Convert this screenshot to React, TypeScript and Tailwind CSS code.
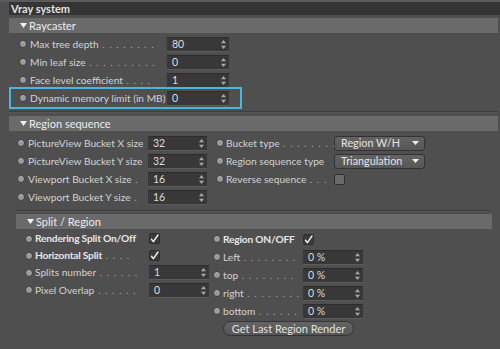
import React from "react";

const Radio = () => (
  <span className="w-[8px] h-[8px] shrink-0 rounded-full bg-[#9a9a9a] border border-[#3c3c3c] shadow-[inset_0_1px_0_rgba(255,255,255,0.35)]" />
);

const Spin = () => (
  <svg width="5" height="9" viewBox="0 0 5 9" className="shrink-0">
    <path d="M2.5 0 L5 3.3 L0 3.3 Z" fill="#a8a8a8" />
    <path d="M2.5 9 L5 5.7 L0 5.7 Z" fill="#a8a8a8" />
  </svg>
);

const NumInput = ({ value, w }: { value: string; w: string }) => (
  <div className={`${w} h-[15px] shrink-0 flex items-center justify-between pl-[5px] pr-[3px] bg-[#383838] border-t border-[#2c2c2c] border-b border-b-[#5c5c5c] text-[#dcdcdc] text-[10.5px]`}>
    <span>{value}</span>
    <Spin />
  </div>
);

const Check = ({ on, light }: { on?: boolean; light?: boolean }) => (
  <div
    className={`w-[11px] h-[11px] shrink-0 rounded-[2px] border border-[#2e2e2e] flex items-center justify-center ${
      light ? "bg-[#6a6a6a]" : "bg-[#3a3a3a]"
    }`}
  >
    {on && (
      <svg width="9" height="9" viewBox="0 0 9 9">
        <path d="M1.5 5.2 L3.4 7.6 L8 1" stroke="#f2f2f2" strokeWidth="1.4" fill="none" strokeLinecap="round" />
      </svg>
    )}
  </div>
);

const Dropdown = ({ value }: { value: string }) => (
  <div className="w-[91px] h-[15px] shrink-0 flex items-center justify-between pl-[6px] pr-[5px] rounded-[3px] bg-gradient-to-b from-[#636363] to-[#575757] border border-[#333333] text-[#e4e4e4] text-[10.8px]">
    <span>{value}</span>
    <svg width="7" height="4" viewBox="0 0 7 4">
      <path d="M0 0 L7 0 L3.5 4 Z" fill="#eeeeee" />
    </svg>
  </div>
);

// label followed by leader dots, as many as the reference shows room for
const Label = ({ text, w, gap, bold, dots = 0 }: { text: string; w: string; gap: string; bold?: boolean; dots?: number }) => (
  <div className={`${w} ${gap} shrink-0 flex whitespace-nowrap`}>
    <span className={bold ? "font-bold text-[#e6e6e6] tracking-[-0.2px]" : ""}>{text}</span>
    {dots > 0 && <span className="text-[#a5a5a5] tracking-[1px] whitespace-pre">{" .".repeat(dots)}</span>}
  </div>
);

const Header = ({ title, cls }: { title: string; cls: string }) => (
  <div className={`${cls} h-[15px] flex items-center bg-[#6a6a6a] text-[#ececec] text-[11px]`}>
    <svg width="7" height="5" viewBox="0 0 7 5" className="mr-[2px]">
      <path d="M0 0 L7 0 L3.5 5 Z" fill="#f0f0f0" />
    </svg>
    {title}
  </div>
);

export default function App() {
  const raycaster: [string, string, number][] = [
    ["Max tree depth", "80", 8],
    ["Min leaf size", "0", 10],
    ["Face level coefficient", "1", 4],
  ];
  const bucket: [string, string, number][] = [
    ["PictureView Bucket X size", "32", 0],
    ["PictureView Bucket Y size", "32", 0],
    ["Viewport Bucket X size", "16", 1],
    ["Viewport Bucket Y size", "16", 1],
  ];
  const region: [string, number][] = [
    ["Left", 8],
    ["top", 8],
    ["right", 8],
    ["bottom", 6],
  ];

  return (
    <div className="w-[500px] h-[349px] overflow-hidden bg-[#4f4f4f] text-[#d2d2d2] text-[10.2px] leading-none font-['Lato','Liberation_Sans',sans-serif]">
      <div className="h-[2px] bg-[#5b5b5b]" />
      <div className="ml-[9px] h-[13px] bg-[#353535] flex items-center pl-[2px] font-bold text-[#e2e2e2] text-[11px]">
        Vray system
      </div>
      <div className="h-[3px]" />
      <Header title="Raycaster" cls="ml-[9px] mr-[2px] pl-[11px]" />

      {/* Raycaster */}
      <div className="pt-[2px] flex flex-col">
        {raycaster.map(([l, v, d]) => (
          <div key={l} className="ml-[11px] w-[229px] h-[18px] flex items-center pl-[8px]">
            <Radio />
            <Label text={l} w="w-[137px]" gap="ml-[3px]" dots={d} />
            <NumInput value={v} w="w-[62px]" />
          </div>
        ))}
        <div className="ml-[11px] w-[229px] h-[18px] flex items-center pl-[8px] ring-2 ring-[#47b8dc]">
          <Radio />
          <Label text="Dynamic memory limit (in MB)" w="w-[137px]" gap="ml-[3px]" />
          <NumInput value="0" w="w-[62px]" />
        </div>
      </div>

      <div className="mt-[4px] ml-[9px] mr-[3px] h-[1px] bg-[#3c3c3c]" />
      <div className="ml-[9px] mr-[3px] h-[1px] bg-[#575757]" />
      <div className="h-[3px]" />
      <Header title="Region sequence" cls="ml-[9px] mr-[2px] pl-[11px]" />

      {/* Region sequence */}
      <div className="pt-[3px] flex">
        <div className="ml-[11px] w-[200px] flex flex-col">
          {bucket.map(([l, v, d]) => (
            <div key={l} className="h-[18px] flex items-center pl-[6px]">
              <Radio />
              <Label text={l} w="w-[120px]" gap="ml-[3px]" dots={d} />
              <NumInput value={v} w="w-[59px]" />
            </div>
          ))}
        </div>
        <div className="flex flex-col">
          <div className="h-[18px] flex items-center pl-[5px]">
            <Radio />
            <Label text="Bucket type" w="w-[108px]" gap="ml-[2px]" dots={8} />
            <Dropdown value="Region W/H" />
          </div>
          <div className="h-[18px] flex items-center pl-[5px]">
            <Radio />
            <Label text="Region sequence type" w="w-[108px]" gap="ml-[2px]" />
            <Dropdown value="Triangulation" />
          </div>
          <div className="h-[18px] flex items-center pl-[5px]">
            <Radio />
            <Label text="Reverse sequence" w="w-[108px]" gap="ml-[2px]" dots={3} />
            <Check light />
          </div>
        </div>
      </div>

      <div className="mt-[4px] ml-[16px] mr-[10px] h-[1px] bg-[#3c3c3c]" />
      <div className="ml-[16px] mr-[10px] h-[1px] bg-[#575757]" />
      <div className="h-[2px]" />
      <Header title="Split / Region" cls="ml-[16px] mr-[8px] pl-[11px]" />

      {/* Split / Region */}
      <div className="pt-[1px] flex">
        <div className="ml-[16px] w-[193px] flex flex-col">
          <div className="h-[17px] flex items-center pl-[9px]">
            <Radio />
            <Label text="Rendering Split On/Off" w="w-[114px]" gap="ml-[2px]" bold />
            <Check on />
          </div>
          <div className="h-[17px] flex items-center pl-[9px]">
            <Radio />
            <Label text="Horizontal Split" w="w-[114px]" gap="ml-[2px]" bold dots={4} />
            <Check on />
          </div>
          <div className="h-[17px] flex items-center pl-[9px]">
            <Radio />
            <Label text="Splits number" w="w-[114px]" gap="ml-[2px]" dots={6} />
            <NumInput value="1" w="w-[60px]" />
          </div>
          <div className="h-[18px] flex items-center pl-[9px]">
            <Radio />
            <Label text="Pixel Overlap" w="w-[114px]" gap="ml-[2px]" dots={6} />
            <NumInput value="0" w="w-[60px]" />
          </div>
        </div>
        <div className="flex flex-col">
          <div className="h-[18px] flex items-center pl-[4px]">
            <Radio />
            <Label text="Region ON/OFF" w="w-[80px]" gap="ml-[2px]" bold />
            <Check on />
          </div>
          {region.map(([l, d]) => (
            <div key={l} className="h-[18px] flex items-center pl-[4px]">
              <Radio />
              <Label text={l} w="w-[80px]" gap="ml-[2px]" dots={d} />
              <NumInput value="0 %" w="w-[60px]" />
            </div>
          ))}
          <div className="mt-[1px] ml-[14px] w-[131px] h-[15px] rounded-full bg-gradient-to-b from-[#646464] to-[#565656] border border-[#343434] flex items-center justify-center text-[#e2e2e2] text-[11px]">
            Get Last Region Render
          </div>
        </div>
      </div>
    </div>
  );
}
